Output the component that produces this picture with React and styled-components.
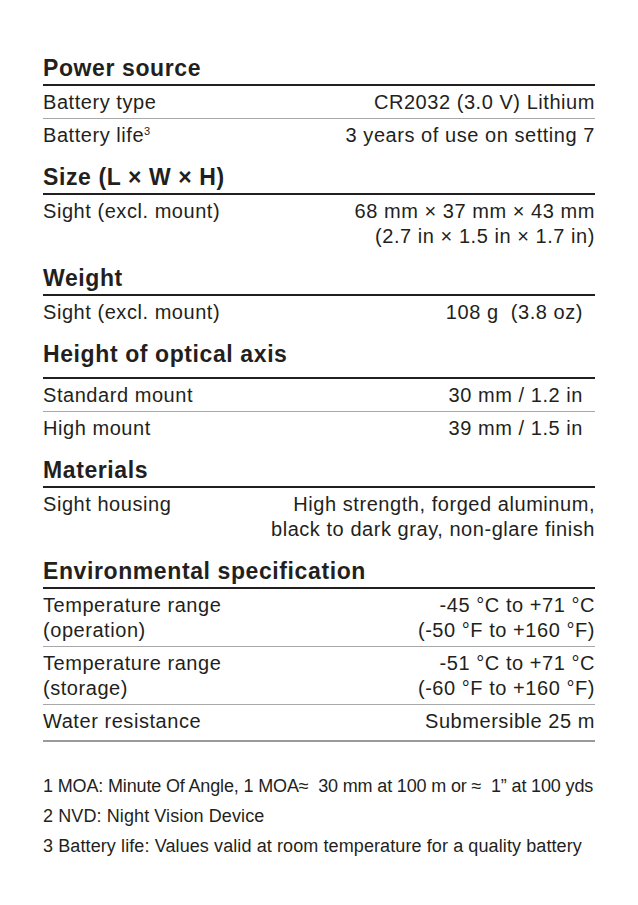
import React from 'react';
import styled, { createGlobalStyle } from 'styled-components';

const GlobalStyle = createGlobalStyle`
  html, body {
    margin: 0;
    padding: 0;
    background: #ffffff;
  }
  body {
    font-family: "Liberation Sans", Arial, Helvetica, sans-serif;
    color: #231f20;
  }
`;

const Page = styled.div`
  width: 552px;
  padding: 54px 0 40px 43px;
`;

const Section = styled.section`
  margin-top: ${props => (props.first ? '0' : '12px')};
`;

const Heading = styled.h2`
  margin: 0;
  font-size: 23px;
  font-weight: 700;
  letter-spacing: 0.6px;
  line-height: 28px;
  padding-bottom: ${props => 2 + (props.extra || 0)}px;
  border-bottom: 2px solid #231f20;
`;

const Row = styled.div`
  display: flex;
  justify-content: space-between;
  align-items: flex-start;
  padding: 4px 0 ${props => (props.closing ? '6px' : '3px')};
  border-bottom: ${props =>
    props.closing ? '2px solid #9a9a9a' : props.last ? 'none' : '1px solid #a8a8a8'};
  font-size: 20px;
  letter-spacing: 0.55px;
  line-height: 25px;
`;

const Label = styled.div`
  text-align: left;
`;

const Value = styled.div`
  text-align: right;
  padding-right: ${props => props.inset || 0}px;
  white-space: pre;
`;

const Sup = styled.sup`
  font-size: 11px;
  line-height: 0;
  vertical-align: 7px;
`;

const Notes = styled.div`
  margin-top: 29px;
  font-size: 18px;
  line-height: 30px;
  white-space: pre;
`;

const Note = styled.div`
  letter-spacing: ${props => (props.tight ? '-0.15px' : '0.1px')};
`;

const sections = [
  {
    title: 'Power source',
    rows: [
      { label: 'Battery type', value: ['CR2032 (3.0 V) Lithium'] },
      { label: 'Battery life', sup: '3', value: ['3 years of use on setting 7'] },
    ],
  },
  {
    title: 'Size (L × W × H)',
    rows: [
      {
        label: 'Sight (excl. mount)',
        value: ['68 mm × 37 mm × 43 mm', '(2.7 in × 1.5 in × 1.7 in)'],
      },
    ],
  },
  {
    title: 'Weight',
    rows: [{ label: 'Sight (excl. mount)', value: ['108 g  (3.8 oz)'], inset: 12 }],
  },
  {
    title: 'Height of optical axis',
    extra: 7,
    rows: [
      { label: 'Standard mount', value: ['30 mm / 1.2 in'], inset: 12 },
      { label: 'High mount', value: ['39 mm / 1.5 in'], inset: 12 },
    ],
  },
  {
    title: 'Materials',
    rows: [
      {
        label: 'Sight housing',
        value: ['High strength, forged aluminum,', 'black to dark gray, non-glare finish'],
      },
    ],
  },
  {
    title: 'Environmental specification',
    closing: true,
    rows: [
      {
        label: ['Temperature range', '(operation)'],
        value: ['-45 °C to +71 °C', '(-50 °F to +160 °F)'],
      },
      {
        label: ['Temperature range', '(storage)'],
        value: ['-51 °C to +71 °C', '(-60 °F to +160 °F)'],
      },
      { label: 'Water resistance', value: ['Submersible 25 m'] },
    ],
  },
];

function Lines({ items }) {
  const list = Array.isArray(items) ? items : [items];
  return list.map((line, i) => <div key={i}>{line}</div>);
}

export default function App() {
  return (
    <>
      <GlobalStyle />
      <Page>
        {sections.map((section, si) => (
          <Section key={section.title} first={si === 0}>
            <Heading extra={section.extra}>{section.title}</Heading>
            {section.rows.map((row, ri) => {
              const isLast = ri === section.rows.length - 1;
              return (
                <Row key={ri} last={isLast} closing={isLast && section.closing}>
                  <Label>
                    {row.sup ? (
                      <>
                        {row.label}
                        <Sup>{row.sup}</Sup>
                      </>
                    ) : (
                      <Lines items={row.label} />
                    )}
                  </Label>
                  <Value inset={row.inset}>
                    <Lines items={row.value} />
                  </Value>
                </Row>
              );
            })}
          </Section>
        ))}
        <Notes>
          <Note tight>1 MOA: Minute Of Angle, 1 MOA≈  30 mm at 100 m or ≈  1” at 100 yds</Note>
          <Note>2 NVD: Night Vision Device</Note>
          <Note>3 Battery life: Values valid at room temperature for a quality battery</Note>
        </Notes>
      </Page>
    </>
  );
}
